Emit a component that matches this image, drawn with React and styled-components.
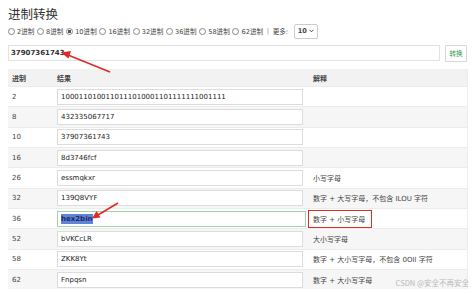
import React from 'react'
import styled, { createGlobalStyle } from 'styled-components'

const GlobalStyle = createGlobalStyle`
  html, body {
    margin: 0;
    padding: 0;
    background: #fff;
  }
  body {
    font-family: 'DejaVu Sans', 'Noto Sans CJK SC', sans-serif;
    color: #333;
  }
`

const bases = [2, 8, 10, 16, 32, 36, 58, 62]

const rows = [
  { base: '2', value: '1000110100110111010001101111111001111', note: '' },
  { base: '8', value: '432335067717', note: '' },
  { base: '10', value: '37907361743', note: '' },
  { base: '16', value: '8d3746fcf', note: '' },
  { base: '26', value: 'essmqkxr', note: '小写字母' },
  { base: '32', value: '139Q8VYF', note: '数字 + 大写字母，不包含 ILOU 字符' },
  { base: '36', value: 'hex2bin', note: '数字 + 小写字母', active: true },
  { base: '52', value: 'bVKCcLR', note: '大小写字母' },
  { base: '58', value: 'ZKK8Yt', note: '数字 + 大小写字母，不包含 0OIl 字符' },
  { base: '62', value: 'Fnpqsn', note: '数字 + 大小写字母' },
]

const App = () => {
  return (
    <>
      <GlobalStyle />
      <Page>
        <Title>进制转换</Title>
        <RadioRow>
          {bases.map((b) => (
            <RadioItem key={b}>
              <Radio checked={b === 10} />
              <span>{b}进制</span>
            </RadioItem>
          ))}
          <Divider>|</Divider>
          <span>更多:</span>
          <Select>
            <b>10</b>
            <svg width='5' height='4' viewBox='0 0 5 4'>
              <path d='M0.6 0.8 L2.5 2.8 L4.4 0.8' fill='none' stroke='#333' strokeWidth='0.9' />
            </svg>
          </Select>
        </RadioRow>
        <InputRow>
          <MainInput>37907361743</MainInput>
          <ConvertButton>转换</ConvertButton>
        </InputRow>
        <Table>
          <HeadRow>
            <Cell>进制</Cell>
            <Cell>结果</Cell>
            <Cell>解释</Cell>
          </HeadRow>
          {rows.map((r, i) => (
            <Row key={r.base} $striped={i % 2 === 1}>
              <Cell>{r.base}</Cell>
              <Cell>
                <ValueBox $active={r.active}>
                  {r.active ? <Selected>{r.value}</Selected> : r.value}
                </ValueBox>
              </Cell>
              <Cell>
                {r.active ? <Marked>{r.note}</Marked> : r.note}
              </Cell>
            </Row>
          ))}
        </Table>
        <Watermark>CSDN @安全不再安全</Watermark>
        <Arrows width='474' height='294' viewBox='0 0 474 294'>
          <line x1='110' y1='72' x2='68' y2='55' stroke='#e02a24' strokeWidth='1.6' />
          <polygon points='61,52.5 71,51 68.5,58.5' fill='#e02a24' />
          <line x1='118' y1='203' x2='98' y2='215' stroke='#e02a24' strokeWidth='1.6' />
          <polygon points='92,218.5 96.5,211 100.5,217.5' fill='#e02a24' />
        </Arrows>
      </Page>
    </>
  )
}

const Page = styled.div`
  position: relative;
  width: 474px;
  height: 294px;
  box-sizing: border-box;
  padding: 5px 7px 0 8px;
  overflow: hidden;
  font-size: 7px;
`

const Title = styled.div`
  font-family: 'Noto Sans CJK SC', sans-serif;
  font-size: 12.5px;
  line-height: 18px;
  color: #333;
`

const RadioRow = styled.div`
  display: flex;
  align-items: center;
  height: 16px;
  gap: 2.7px;
  color: #444;
  font-size: 6.6px;
`

const RadioItem = styled.label`
  display: flex;
  align-items: center;
  gap: 2px;
`

const Radio = styled.span`
  width: 5px;
  height: 5px;
  border-radius: 50%;
  border: 0.8px solid #888;
  background: ${(p) => (p.checked ? 'radial-gradient(circle, #555 45%, #fff 55%)' : '#fff')};
`

const Divider = styled.span`
  color: #888;
  margin: 0 1px;
`

const Select = styled.div`
  display: flex;
  align-items: center;
  gap: 2px;
  height: 13px;
  padding: 0 3px;
  margin-left: 3px;
  border: 1px solid #ccc;
  border-radius: 2px;
  b {
    font-weight: 600;
  }
`

const InputRow = styled.div`
  display: flex;
  align-items: center;
  gap: 5px;
  margin-top: 6px;
  height: 16px;
`

const MainInput = styled.div`
  width: 432px;
  height: 16px;
  box-sizing: border-box;
  border: 1px solid #e2e2e2;
  padding-left: 2px;
  display: flex;
  align-items: center;
  font-weight: 600;
  color: #333;
`

const ConvertButton = styled.div`
  width: 22px;
  height: 17px;
  box-sizing: border-box;
  border: 1px solid #d6d6d6;
  border-radius: 1px;
  display: flex;
  align-items: center;
  justify-content: center;
  color: #2e9a4b;
  font-family: 'Noto Sans CJK SC', sans-serif;
  font-size: 6.5px;
`

const Table = styled.div`
  margin-top: 8px;
  width: 459px;
  border-right: 1px solid #eee;
`

const HeadRow = styled.div`
  display: grid;
  grid-template-columns: 44px 256px 1fr;
  height: 17px;
  align-items: center;
  background: #f2f2f2;
  font-weight: 600;
  color: #444;
`

const Row = styled.div`
  display: grid;
  grid-template-columns: 44px 256px 1fr;
  height: 20.33px;
  box-sizing: border-box;
  align-items: center;
  border-top: 1px solid #ececec;
  background: ${(p) => (p.$striped ? '#f6f6f6' : '#fff')};
  color: #444;
`

const Cell = styled.div`
  padding: 0 5px 0 4px;
  white-space: nowrap;
  &:nth-child(2) {
    padding-left: 5px;
  }
  &:nth-child(3) {
    padding-left: 5px;
  }
`

const ValueBox = styled.div`
  height: 16px;
  width: ${(p) => (p.$active ? '249px' : '246px')};
  box-sizing: border-box;
  background: #fff;
  border: 1px solid ${(p) => (p.$active ? '#9fd4ae' : '#dcdcdc')};
  display: flex;
  align-items: center;
  padding-left: 3px;
  color: #222;
`

const Selected = styled.span`
  background: #5f83d8;
  color: #1c2a66;
  font-weight: 600;
  padding: 1px 0;
`

const Marked = styled.span`
  display: inline-block;
  margin-left: -5px;
  padding: 3px 6px 3px 4px;
  border: 1.6px solid #e02a24;
`

const Watermark = styled.div`
  position: absolute;
  right: 5px;
  bottom: 6px;
  font-size: 7.5px;
  color: #b8b8b8;
  font-family: 'Noto Sans CJK SC', sans-serif;
`

const Arrows = styled.svg`
  position: absolute;
  left: 0;
  top: 0;
  pointer-events: none;
`

export default App
